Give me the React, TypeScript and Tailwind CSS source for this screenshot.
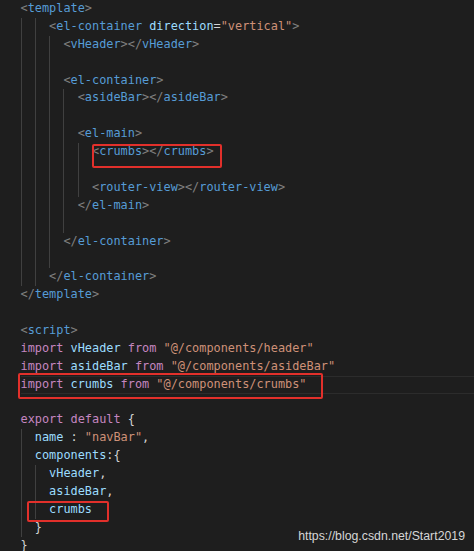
import React from 'react';

type Tok = [string, string];

// vscode dark+ token colours
const P = 'text-[#808080]';
const T = 'text-[#569cd6]';
const A = 'text-[#9cdcfe]';
const S = 'text-[#ce9178]';
const K = 'text-[#c586c0]';
const W = 'text-[#d4d4d4]';

type Line = { guides: number; pad?: number; toks: Tok[]; current?: boolean };

const tag = (name: string): Tok[] => [
  ['<', P],
  [name, T],
  ['></', P],
  [name, T],
  ['>', P],
];

const lines: Line[] = [
  { guides: 0, toks: [['<', P], ['template', T], ['>', P]] },
  {
    guides: 2,
    toks: [['<', P], ['el-container', T], [' ', W], ['direction', A], ['=', W], ['"vertical"', S], ['>', P]],
  },
  { guides: 3, toks: tag('vHeader') },
  { guides: 3, toks: [] },
  { guides: 3, toks: [['<', P], ['el-container', T], ['>', P]] },
  { guides: 4, toks: tag('asideBar') },
  { guides: 4, toks: [] },
  { guides: 4, toks: [['<', P], ['el-main', T], ['>', P]] },
  { guides: 5, toks: tag('crumbs') },
  { guides: 5, toks: [] },
  { guides: 5, toks: tag('router-view') },
  { guides: 4, toks: [['</', P], ['el-main', T], ['>', P]] },
  { guides: 4, toks: [] },
  { guides: 3, toks: [['</', P], ['el-container', T], ['>', P]] },
  { guides: 3, toks: [] },
  { guides: 2, toks: [['</', P], ['el-container', T], ['>', P]] },
  { guides: 0, toks: [['</', P], ['template', T], ['>', P]] },
  { guides: 0, toks: [] },
  { guides: 0, toks: [['<', P], ['script', T], ['>', P]] },
  { guides: 0, toks: [['import', K], [' vHeader ', A], ['from', K], [' "@/components/header"', S]] },
  { guides: 0, toks: [['import', K], [' asideBar ', A], ['from', K], [' "@/components/asideBar"', S]] },
  { guides: 0, current: true, toks: [['import', K], [' crumbs ', A], ['from', K], [' "@/components/crumbs"', S]] },
  { guides: 0, toks: [] },
  { guides: 0, toks: [['export default', K], [' {', W]] },
  { guides: 1, toks: [['name', A], [' : ', W], ['"navBar"', S], [',', W]] },
  { guides: 1, toks: [['components', A], [':{', W]] },
  { guides: 2, toks: [['vHeader', A], [',', W]] },
  { guides: 2, toks: [['asideBar', A], [',', W]] },
  { guides: 2, toks: [['crumbs', A]] },
  { guides: 1, toks: [['}', W]] },
  { guides: 0, toks: [['}', W]] },
];

const CodeLine = ({ line }: { line: Line }) => (
  <div
    className={`flex h-[17.9px] items-center whitespace-pre ${
      line.current ? 'border-y border-[#2c2c2c]' : ''
    }`}
  >
    {Array.from({ length: line.guides }).map((_, i) => (
      <span key={i} className="inline-block h-full w-[2ch] shrink-0 border-l border-[#404040]" />
    ))}
    {line.toks.map(([text, color], i) => (
      <span key={i} className={color}>
        {text}
      </span>
    ))}
  </div>
);

export default function App() {
  return (
    <div className="relative h-[551px] w-[474px] overflow-hidden bg-[#1e1e1e]">
      <div
        className="pl-[20.5px] text-[11.88px] leading-[17.9px] text-[#d4d4d4]"
        style={{ fontFamily: '"DejaVu Sans Mono", "Liberation Mono", monospace' }}
      >
        {lines.map((line, i) => (
          <CodeLine key={i} line={line} />
        ))}
      </div>

      {/* red annotation boxes */}
      <div className="pointer-events-none absolute left-[92px] top-[144px] h-[24px] w-[130px] rounded-[2px] border-2 border-[#e2302b]" />
      <div className="pointer-events-none absolute left-[18px] top-[373px] h-[26px] w-[305px] rounded-[2px] border-2 border-[#e2302b]" />
      <div className="pointer-events-none absolute left-[27px] top-[501px] h-[21px] w-[82px] rounded-[2px] border-2 border-[#e2302b]" />

      {/* watermark */}
      <div
        className="absolute bottom-[9px] right-[9px] text-[12.3px] leading-none text-[#d6d6d6]"
        style={{ fontFamily: '"Liberation Sans", Arial, sans-serif' }}
      >
        https://blog.csdn.net/Start2019
      </div>
    </div>
  );
}
